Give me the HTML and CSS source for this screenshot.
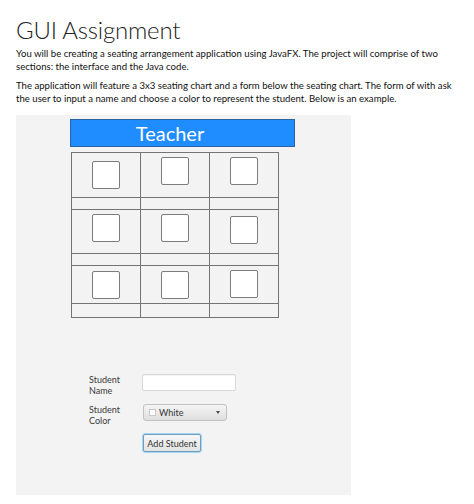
FILE: index.html
```html
<!DOCTYPE html>
<html lang="en">
<head>
<meta charset="utf-8">
<title>GUI Assignment</title>
<link rel="stylesheet" href="styles.css">
</head>
<body>
<main class="doc">
  <h1 class="title">GUI Assignment</h1>
  <p class="para">You will be creating a seating arrangement application using JavaFX. The project will comprise of two<br>sections: the interface and the Java code.</p>
  <p class="para">The application will feature a 3x3 seating chart and a form below the seating chart. The form of with ask<br>the user to input a name and choose a color to represent the student. Below is an example.</p>

  <section class="panel">
    <div class="teacher">Teacher</div>
    <div class="chart">
      <div class="cell"><span class="seat o8"></span></div>
      <div class="cell"><span class="seat o4"></span></div>
      <div class="cell"><span class="seat o4"></span></div>
      <div class="cell"></div><div class="cell"></div><div class="cell"></div>
      <div class="cell"><span class="seat o4"></span></div>
      <div class="cell"><span class="seat o4"></span></div>
      <div class="cell"><span class="seat o6"></span></div>
      <div class="cell"></div><div class="cell"></div><div class="cell"></div>
      <div class="cell"><span class="seat o5"></span></div>
      <div class="cell"><span class="seat o5"></span></div>
      <div class="cell"><span class="seat o4"></span></div>
      <div class="cell"></div><div class="cell"></div><div class="cell"></div>
    </div>

    <form class="form">
      <label class="label" for="name">Student<br>Name</label>
      <input class="input" id="name" type="text">
      <span class="label">Student<br>Color</span>
      <div class="select">
        <span class="swatch"></span>
        <span class="select-text">White</span>
        <span class="arrow"></span>
      </div>
      <button class="button" type="button">Add Student</button>
    </form>
  </section>
</main>
</body>
</html>
```

FILE: styles.css
```css
* { box-sizing: border-box; }

html, body {
  margin: 0;
  padding: 0;
  background: #ffffff;
}

.doc {
  padding: 16px 0 0 16px;
  font-family: "Lato", "Liberation Sans", sans-serif;
  color: #1a1a1a;
}

.title {
  margin: 0;
  font-family: "Lato", "Liberation Sans", sans-serif;
  font-weight: 300;
  font-size: 24px;
  line-height: 28px;
  color: #222;
  letter-spacing: -0.2px;
}

.para {
  margin: 3px 0 6px;
  font-size: 9.6px;
  line-height: 13px;
  color: #111;
}

.para + .para {
  margin-top: 0;
}

.panel {
  width: 335px;
  height: 380px;
  margin-top: 10px;
  background: #f3f3f3;
  padding-top: 4px;
}

.teacher {
  margin-left: 54px;
  width: 225px;
  height: 28px;
  background: #1f8cff;
  border: 1px solid #2b63a8;
  color: #ffffff;
  font-family: "Lato", "Open Sans", sans-serif;
  font-size: 20px;
  line-height: 26px;
  text-align: center;
  padding-right: 25px;
}

.chart {
  margin: 5px 0 0 55px;
  width: 208px;
  display: grid;
  grid-template-columns: repeat(3, 1fr);
  grid-template-rows: 45px 12px 44px 12px 38px 14px;
  border-top: 1px solid #747474;
  border-left: 1px solid #747474;
}

.cell {
  border-right: 1px solid #747474;
  border-bottom: 1px solid #747474;
  display: flex;
  justify-content: center;
  align-items: flex-start;
}

.seat {
  display: block;
  width: 28px;
  height: 28px;
  background: #ffffff;
  border: 1.5px solid #7c7c7c;
  border-radius: 2px;
}

.o4 { margin-top: 4px; }
.o5 { margin-top: 5px; }
.o6 { margin-top: 6px; }
.o8 { margin-top: 8px; }

.form {
  margin: 56px 0 0 73px;
  display: grid;
  grid-template-columns: 53px auto;
  row-gap: 8px;
  align-items: start;
  justify-items: start;
  font-family: "Lato", "Liberation Sans", sans-serif;
}

.label {
  font-size: 9px;
  line-height: 11px;
  color: #3a3a3a;
}

.input {
  width: 94px;
  height: 17px;
  margin: 0;
  padding: 0 4px;
  background: #ffffff;
  border: 1px solid #d8d8d8;
  border-radius: 2px;
  box-shadow: inset 0 1px 1px rgba(0, 0, 0, 0.05);
  outline: none;
}

.select {
  width: 84px;
  height: 17px;
  margin-left: 1px;
  display: flex;
  align-items: center;
  border: 1px solid #c2c2c2;
  border-radius: 3px;
  background: linear-gradient(#f5f5f5, #dedede);
}

.swatch {
  width: 7px;
  height: 7px;
  margin-left: 5px;
  background: #ffffff;
  border: 1px solid #c8c8c8;
}

.select-text {
  margin-left: 3px;
  font-size: 9px;
  color: #333;
  flex: 1;
}

.arrow {
  width: 0;
  height: 0;
  margin-right: 6px;
  border-left: 2.5px solid transparent;
  border-right: 2.5px solid transparent;
  border-top: 3px solid #4a4a4a;
}

.button {
  grid-column: 2;
  width: 58px;
  height: 18px;
  margin: 0 0 0 1px;
  padding: 0;
  font-family: "Lato", "Liberation Sans", sans-serif;
  font-size: 9px;
  color: #333;
  background: linear-gradient(#f7f7f7, #e3e3e3);
  border: 1px solid #6f9fc0;
  border-radius: 2px;
  box-shadow: 0 0 0 1px #a9d6ee;
}
```
